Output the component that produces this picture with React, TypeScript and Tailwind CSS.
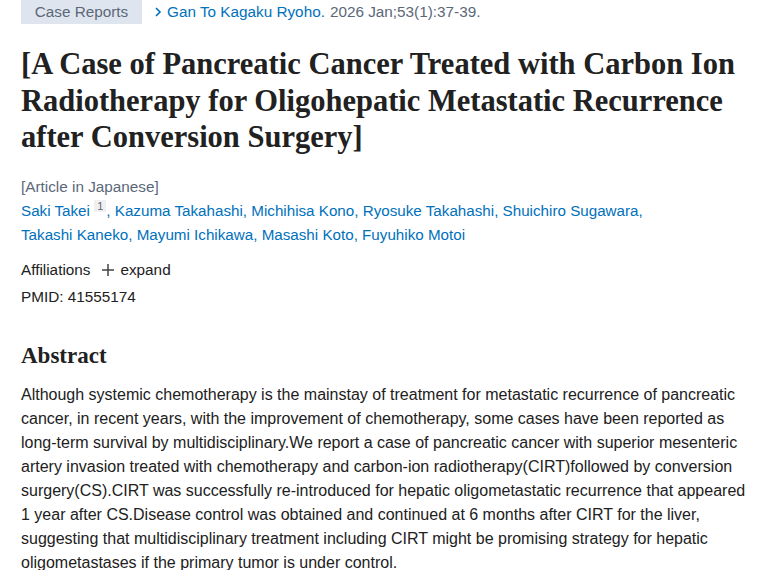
import React from "react";

const body = { fontFamily: '"Liberation Sans", Arial, sans-serif' };
const serif = { fontFamily: '"Liberation Serif", "Times New Roman", serif' };

export default function App() {
  const authors1 = ["Kazuma Takahashi", "Michihisa Kono", "Ryosuke Takahashi", "Shuichiro Sugawara"];
  const authors2 = ["Takashi Kaneko", "Mayumi Ichikawa", "Masashi Koto", "Fuyuhiko Motoi"];
  return (
    <div className="w-[760px] h-[570px] overflow-hidden bg-white pl-[21px] text-[#212121]" style={body}>
      <div className="flex items-center h-[24px] text-[15.3px]">
        <span className="h-[24px] w-[121px] flex items-center justify-center bg-[#dfe5ee] text-[#5b6879]">Case Reports</span>
        <span className="ml-[11px] flex items-center text-[#0071bc]">
          <svg width="10" height="12" viewBox="0 0 10 12" className="mr-[4px]"><path d="M3 2l4 4-4 4" fill="none" stroke="#0071bc" strokeWidth="1.6" /></svg>
          Gan To Kagaku Ryoho.
        </span>
        <span className="ml-[5px] text-[#5b6879]">2026 Jan;53(1):37-39.</span>
      </div>

      <h1 className="mt-[22px] text-[30.5px] leading-[36.5px] font-bold text-[#212121] whitespace-nowrap" style={serif}>
        [A Case of Pancreatic Cancer Treated with Carbon Ion<br />
        Radiotherapy for Oligohepatic Metastatic Recurrence<br />
        after Conversion Surgery]
      </h1>

      <div className="mt-[19px] text-[15.3px] leading-[24px] text-[#5b6879]">[Article in Japanese]</div>
      <div className="text-[15.2px] leading-[24px] text-[#0071bc]">
        Saki Takei{" "}
        <sup className="px-[3px] bg-[#f0f0f0] text-[#5b6879] text-[11px]">1</sup>
        {authors1.map((a) => (
          <span key={a}>, {a}</span>
        ))}
        ,<br />
        {authors2.map((a, i) => (
          <span key={a}>{i > 0 ? ", " : ""}{a}</span>
        ))}
      </div>

      <div className="mt-[11px] flex items-center text-[15.3px] leading-[24px] text-[#212121]">
        Affiliations
        <span className="ml-[12px] mr-[6px] flex items-center">
          <svg width="12" height="12" viewBox="0 0 12 12"><path d="M6 0v12M0 6h12" stroke="#444" strokeWidth="1.5" /></svg>
        </span>
        expand
      </div>
      <div className="mt-[3px] text-[15.3px] leading-[24px] text-[#212121]">PMID: 41555174</div>

      <h2 className="mt-[33px] text-[23px] leading-[28px] font-bold text-[#212121]" style={serif}>Abstract</h2>

      <p className="mt-[13px] text-[16px] leading-[24px] text-[#212121] whitespace-nowrap">
        Although systemic chemotherapy is the mainstay of treatment for metastatic recurrence of pancreatic<br />
        cancer, in recent years, with the improvement of chemotherapy, some cases have been reported as<br />
        long-term survival by multidisciplinary.We report a case of pancreatic cancer with superior mesenteric<br />
        artery invasion treated with chemotherapy and carbon-ion radiotherapy(CIRT)followed by conversion<br />
        surgery(CS).CIRT was successfully re-introduced for hepatic oligometastatic recurrence that appeared<br />
        1 year after CS.Disease control was obtained and continued at 6 months after CIRT for the liver,<br />
        suggesting that multidisciplinary treatment including CIRT might be promising strategy for hepatic<br />
        oligometastases if the primary tumor is under control.
      </p>
    </div>
  );
}
